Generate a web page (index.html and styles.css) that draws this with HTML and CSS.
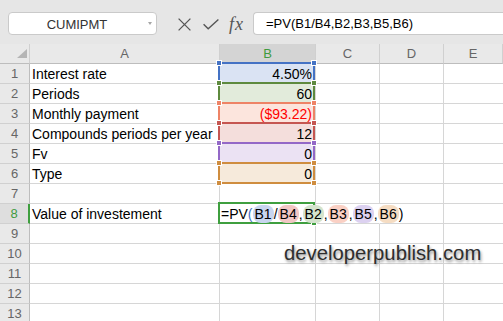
FILE: index.html
```html
<!DOCTYPE html>
<html>
<head>
<meta charset="utf-8">
<link rel="stylesheet" href="styles.css">
</head>
<body>
<div class="app">
  <div class="toolbar">
    <div class="namebox"><span class="nb-text">CUMIPMT</span><span class="dd"></span></div>
    <svg class="ic-x" width="13" height="13" viewBox="0 0 13 13"><path d="M0.6 0.6 L12.4 12.4 M12.4 0.6 L0.6 12.4" stroke="#555" stroke-width="1.3" fill="none"/></svg>
    <svg class="ic-ok" width="16" height="11" viewBox="0 0 16 11"><path d="M0.6 5.2 L5.2 9.8 L15.4 0.6" stroke="#555" stroke-width="1.4" fill="none"/></svg>
    <span class="fx">fx</span>
    <div class="formula">=PV(B1/B4,B2,B3,B5,B6)</div>
  </div>

  <div class="sheet">
    <div class="hd corner"><svg width="10" height="9" viewBox="0 0 10 9"><path d="M10 0 L10 9 L0 9 Z" fill="#b5b5b5"/></svg></div>
    <div class="hd col">A</div>
    <div class="hd col sel">B</div>
    <div class="hd col">C</div>
    <div class="hd col">D</div>
    <div class="hd col last">E</div>

    <div class="hd row">1</div>
    <div class="c">Interest rate</div>
    <div class="c num ref r1"><span class="rng"><i class="h tl"></i><i class="h tr"></i><i class="h bl"></i><i class="h br"></i></span>4.50%</div>
    <div class="c"></div><div class="c"></div><div class="c last"></div>

    <div class="hd row">2</div>
    <div class="c">Periods</div>
    <div class="c num ref r2"><span class="rng"><i class="h tl"></i><i class="h tr"></i><i class="h bl"></i><i class="h br"></i></span>60</div>
    <div class="c"></div><div class="c"></div><div class="c last"></div>

    <div class="hd row">3</div>
    <div class="c">Monthly payment</div>
    <div class="c num ref r3 neg"><span class="rng"><i class="h tl"></i><i class="h tr"></i><i class="h bl"></i><i class="h br"></i></span>($93.22)</div>
    <div class="c"></div><div class="c"></div><div class="c last"></div>

    <div class="hd row">4</div>
    <div class="c">Compounds periods per year</div>
    <div class="c num ref r4"><span class="rng"><i class="h tl"></i><i class="h tr"></i><i class="h bl"></i><i class="h br"></i></span>12</div>
    <div class="c"></div><div class="c"></div><div class="c last"></div>

    <div class="hd row">5</div>
    <div class="c">Fv</div>
    <div class="c num ref r5"><span class="rng"><i class="h tl"></i><i class="h tr"></i><i class="h bl"></i><i class="h br"></i></span>0</div>
    <div class="c"></div><div class="c"></div><div class="c last"></div>

    <div class="hd row">6</div>
    <div class="c">Type</div>
    <div class="c num ref r6"><span class="rng"><i class="h tl"></i><i class="h tr"></i><i class="h bl"></i><i class="h br"></i></span>0</div>
    <div class="c"></div><div class="c"></div><div class="c last"></div>

    <div class="hd row">7</div>
    <div class="c"></div><div class="c"></div><div class="c"></div><div class="c"></div><div class="c last"></div>

    <div class="hd row act">8</div>
    <div class="c">Value of investement</div>
    <div class="c edit"><span class="active"><i class="fill"></i></span>=PV<span class="par">(</span><span class="p p1">B1</span>/<span class="p p4">B4</span>,<span class="p p2">B2</span>,<span class="p p3">B3</span>,<span class="p p5">B5</span>,<span class="p p6">B6</span>)</div>
    <div class="c nogrid"></div><div class="c"></div><div class="c last"></div>

    <div class="hd row">9</div>
    <div class="c"></div><div class="c"></div><div class="c"></div><div class="c"></div><div class="c last"></div>
    <div class="hd row">10</div>
    <div class="c"></div><div class="c"></div><div class="c"></div><div class="c"></div><div class="c last"></div>
    <div class="hd row">11</div>
    <div class="c"></div><div class="c"></div><div class="c"></div><div class="c"></div><div class="c last"></div>
    <div class="hd row">12</div>
    <div class="c"></div><div class="c"></div><div class="c"></div><div class="c"></div><div class="c last"></div>
    <div class="hd row">13</div>
    <div class="c"></div><div class="c"></div><div class="c"></div><div class="c"></div><div class="c last"></div>
  </div>

  <div class="watermark">developerpublish.com</div>
</div>
</body>
</html>
```

FILE: styles.css
```css
* { box-sizing: border-box; }
html, body { margin: 0; padding: 0; }
body {
  width: 503px;
  height: 321px;
  overflow: hidden;
  background: #fff;
  font-family: "Liberation Sans", Arial, sans-serif;
}
.app { position: relative; width: 503px; height: 321px; overflow: hidden; }

/* toolbar */
.toolbar {
  height: 44px;
  background: #e6e6e6;
  display: flex;
  align-items: flex-start;
  padding-top: 12px;
}
.namebox {
  margin-left: 8px;
  width: 149px;
  height: 23px;
  background: #fff;
  border: 1px solid #cacaca;
  border-radius: 4px;
  display: flex;
  align-items: center;
}
.nb-text {
  flex: 1;
  text-align: center;
  font-size: 13px;
  color: #333;
  padding-top: 1px;
}
.dd {
  width: 0; height: 0;
  margin-right: 4px;
  margin-left: 3px;
  border-left: 2.5px solid transparent;
  border-right: 2.5px solid transparent;
  border-top: 3px solid #a6a6a6;
}
.ic-x { margin-left: 21px; margin-top: 6px; }
.ic-ok { margin-left: 12px; margin-top: 7px; }
.fx {
  margin-left: 10px;
  margin-top: 3px;
  font-family: "Liberation Serif", "Times New Roman", serif;
  font-style: italic;
  font-size: 18px;
  line-height: 18px;
  letter-spacing: 1px;
  color: #555;
  width: 16px;
}
.formula {
  margin-left: 8px;
  flex: 1;
  height: 23px;
  background: #fff;
  border: 1px solid #cacaca;
  border-right: none;
  border-radius: 4px 0 0 4px;
  padding-left: 12px;
  font-size: 13px;
  line-height: 22px;
  color: #000;
}

/* sheet grid */
.sheet {
  display: grid;
  grid-template-columns: 30px 190px 96px 64px 64px 1fr;
  grid-auto-rows: 20px;
}
.hd {
  background: #e9e9e9;
  border-right: 1px solid #d0d0d0;
  border-bottom: 1px solid #d0d0d0;
  color: #666;
  font-size: 13px;
  display: flex;
  align-items: center;
  justify-content: center;
}
.hd.col { border-bottom-color: #bdbdbd; }
.hd.corner {
  justify-content: flex-end;
  align-items: flex-end;
  padding: 0 2px 5px 0;
  border-bottom-color: #bdbdbd;
}
.hd.sel {
  background: #d4d4d4;
  color: #3f9b3f;
  border-bottom: 2px solid #3f9f3f;
}
.hd.row { border-right-color: #bdbdbd; }
.hd.act {
  background: #dedede;
  color: #3f9b3f;
  border-right: 2px solid #3f9f3f;
}
.c {
  position: relative;
  border-right: 1px solid #d6d6d6;
  border-bottom: 1px solid #d6d6d6;
  font-size: 14px;
  line-height: 20px;
  padding-left: 2px;
  color: #000;
  white-space: nowrap;
}
.c.last { border-right: none; }
.c.num { text-align: right; padding-right: 3px; }
.c.neg { color: #ff0000; }
.c.nogrid { border-right-color: transparent; }

/* colored range references */
.ref.r1 { --c: #4472c4; background: #dae3f3; }
.ref.r2 { --c: #5e8a3e; background: #e2ebdb; }
.ref.r3 { --c: #ee8366; background: #fce5dd; }
.ref.r4 { --c: #c55651; background: #f4dedc; }
.ref.r5 { --c: #9368c7; background: #ebe2f3; }
.ref.r6 { --c: #cf8d3f; background: #f6eadb; }
.rng {
  position: absolute;
  top: -2px; left: -2px; right: 0; bottom: -1px;
  border: 2px solid var(--c);
  z-index: 2;
}
.h {
  position: absolute;
  width: 6px; height: 6px;
  background: var(--c);
  border: 1px solid #fff;
}
.h.tl { left: -4px; top: -4px; }
.h.tr { right: -4px; top: -4px; }
.h.bl { left: -4px; bottom: -4px; }
.h.br { right: -4px; bottom: -4px; }

/* active editing cell */
.c.edit { padding-left: 1px; z-index: 3; overflow: visible; }
.active {
  position: absolute;
  top: -2px; left: -2px; right: 0; bottom: -1px;
  border: 2px solid #3f9f3f;
  z-index: -1;
}
.fill {
  position: absolute;
  right: -4px; bottom: -4px;
  width: 6px; height: 6px;
  background: #3f9f3f;
  border: 1px solid #fff;
}
.par { color: #4472c4; }
.p { padding: 1px 2px; border-radius: 8px; }
.p1 { background: #c8d5ef; }
.p4 { background: #f1c6c3; }
.p2 { background: #d4e3cd; }
.p3 { background: #fad0c4; }
.p5 { background: #dcd1f0; }
.p6 { background: #f5dcc2; }

.watermark {
  position: absolute;
  left: 284px;
  top: 242px;
  font-family: "Liberation Sans", Arial, sans-serif;
  font-size: 20.3px;
  color: #2e2e2e;
  text-shadow: 1px 2px 3px rgba(0,0,0,0.45);
  z-index: 5;
}
```
